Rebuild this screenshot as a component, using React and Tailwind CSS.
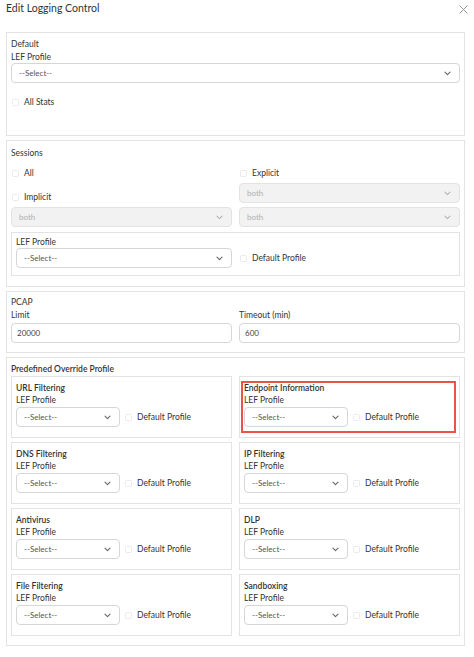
import React from "react";

const Chevron = ({ light }) => (
  <svg width="7" height="5" viewBox="0 0 7 5" className="shrink-0">
    <path d="M1 1.2 L3.5 3.6 L6 1.2" fill="none" stroke={light ? "#b5b5b5" : "#666"} strokeWidth="1.1" strokeLinecap="round" strokeLinejoin="round" />
  </svg>
);

const Select = ({ text = "--Select--", disabled, className = "" }) => (
  <div
    className={
      "h-[20px] rounded-[4px] border flex items-center justify-between pl-[7px] pr-[8px] text-[8px] " +
      (disabled
        ? "bg-[#f2f2f2] border-[#e3e3e3] text-[#b0b0b0] "
        : "bg-white border-[#d6d6d6] text-[#555] ") +
      className
    }
  >
    <span>{text}</span>
    <Chevron light={disabled} />
  </div>
);

const Check = ({ label, className = "" }) => (
  <div className={"flex items-center gap-[5px] h-[12px] " + className}>
    <div className="w-[7px] h-[7px] rounded-[1.5px] border border-[#ebebeb] bg-white shrink-0" />
    <span className="text-[8.5px] text-[#333] leading-[12px]">{label}</span>
  </div>
);

const Box = ({ children, className = "" }) => (
  <div className={"border border-[#e3e3e3] bg-white px-[4px] " + className}>{children}</div>
);

const Label = ({ children, className = "" }) => (
  <div className={"text-[8.5px] leading-[12px] text-[#333] " + className}>{children}</div>
);

const Card = ({ title, highlight }) => (
  <div className="relative border border-[#e3e3e3] px-[4px] pt-[5px] pb-[10px]">
    <div className="text-[8.5px] leading-[12px] text-[#333] font-semibold">{title}</div>
    <Label>LEF Profile</Label>
    <div className="flex items-center mt-[1px]">
      <Select className="w-[104px]" />
      <Check label="Default Profile" className="ml-[5px]" />
    </div>
    {highlight && (
      <div className="absolute left-[1px] top-[4px] w-[215px] h-[52px] border-2 border-[#e9534c] pointer-events-none" />
    )}
  </div>
);

export default function App() {
  return (
    <div
      className="w-[474px] h-[657px] bg-white text-[#333] overflow-hidden"
      style={{ fontFamily: "Lato, 'Open Sans', sans-serif" }}
    >
      <div className="flex items-center justify-between pl-[6px] pr-[6px] h-[16px] mt-[1px]">
        <div className="text-[10.5px] text-[#333]">Edit Logging Control</div>
        <svg width="9" height="9" viewBox="0 0 9 9">
          <path d="M0.5 0.5 L8.5 8.5 M8.5 0.5 L0.5 8.5" stroke="#8a8a8a" strokeWidth="0.9" />
        </svg>
      </div>

      <div className="ml-[6px] w-[459px] mt-[15px] flex flex-col gap-[4px]">
        {/* Default */}
        <Box className="pt-[5px] h-[104px]">
          <Label>Default</Label>
          <Label className="mt-[1px]">LEF Profile</Label>
          <Select />
          <Check label="All Stats" className="mt-[13px] ml-[1px]" />
        </Box>

        {/* Sessions */}
        <Box className="pt-[6px] pb-[10px]">
          <Label>Sessions</Label>
          <div className="grid grid-cols-2 gap-x-[7px] mt-[8px]">
            <div className="flex flex-col justify-between h-[36px]">
              <Check label="All" className="ml-[1px]" />
              <Check label="Implicit" className="ml-[1px]" />
            </div>
            <div className="flex flex-col gap-[4px]">
              <Check label="Explicit" className="ml-[1px]" />
              <Select text="both" disabled />
            </div>
          </div>
          <div className="grid grid-cols-2 gap-x-[7px] mt-[4px]">
            <Select text="both" disabled />
            <Select text="both" disabled />
          </div>
          <div className="border border-[#e3e3e3] mt-[5px] px-[4px] pt-[3px] pb-[7px]">
            <Label>LEF Profile</Label>
            <div className="grid grid-cols-2 gap-x-[7px] items-center">
              <Select />
              <Check label="Default Profile" className="ml-[1px]" />
            </div>
          </div>
        </Box>

        {/* PCAP */}
        <Box className="pt-[4px] pb-[9px]">
          <Label>PCAP</Label>
          <div className="grid grid-cols-2 gap-x-[7px] mt-[1px]">
            <div>
              <Label>Limit</Label>
              <div className="h-[20px] rounded-[4px] border border-[#d6d6d6] flex items-center pl-[5px] text-[8px] text-[#444] mt-[2px]">20000</div>
            </div>
            <div>
              <Label>Timeout (min)</Label>
              <div className="h-[20px] rounded-[4px] border border-[#d6d6d6] flex items-center pl-[5px] text-[8px] text-[#444] mt-[2px]">600</div>
            </div>
          </div>
        </Box>

        {/* Predefined */}
        <Box className="pt-[5px] pb-[9px]">
          <div className="text-[8.5px] leading-[12px] text-[#333] font-semibold">Predefined Override Profile</div>
          <div className="grid grid-cols-2 gap-x-[7px] gap-y-[4px] mt-[1px]">
            <Card title="URL Filtering" />
            <Card title="Endpoint Information" highlight />
            <Card title="DNS Filtering" />
            <Card title="IP Filtering" />
            <Card title="Antivirus" />
            <Card title="DLP" />
            <Card title="File Filtering" />
            <Card title="Sandboxing" />
          </div>
        </Box>
      </div>
    </div>
  );
}
